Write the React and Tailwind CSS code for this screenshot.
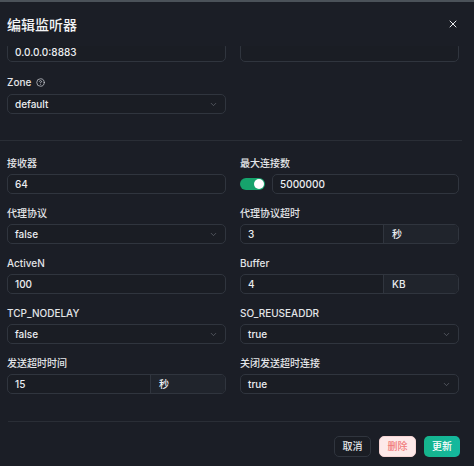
import { X, ChevronDown, CircleHelp } from 'lucide-react';

const FONT = { fontFamily: 'Inter, "Noto Sans CJK SC", sans-serif' };

function Label({ children, extra }) {
  return (
    <div className="h-[14px] mb-[4px] flex items-center gap-[5px] text-[10px] font-medium text-[#e3e5e8]">
      {children}
      {extra}
    </div>
  );
}

function TextInput({ value, className = '' }) {
  return (
    <div className={`h-[20px] flex items-center rounded-[5px] border border-[#30353e] bg-[#1a1d24] pl-[7px] text-[10px] font-medium text-[#eceef1] ${className}`}>
      {value}
    </div>
  );
}

function Select({ value }) {
  return (
    <div className="h-[20px] flex items-center justify-between rounded-[5px] border border-[#30353e] bg-[#1a1d24] pl-[7px] pr-[7px] text-[10px] font-medium text-[#eceef1]">
      <span>{value}</span>
      <ChevronDown className="w-[9px] h-[9px] text-[#6b7079]" strokeWidth={1.75} />
    </div>
  );
}

function Addon({ value, unit }) {
  return (
    <div className="h-[20px] flex rounded-[5px] border border-[#30353e] bg-[#1a1d24] text-[10px] font-medium text-[#eceef1] overflow-hidden">
      <div className="w-[143px] flex items-center pl-[7px] border-r border-[#30353e]">{value}</div>
      <div className="flex-1 flex items-center pl-[8px] bg-[#20242c]">{unit}</div>
    </div>
  );
}

function Field({ label, children, extra }) {
  return (
    <div className="mb-[12px]">
      <Label extra={extra}>{label}</Label>
      {children}
    </div>
  );
}

export default function App() {
  return (
    <div className="w-[474px] h-[466px] bg-[#1b1e26] overflow-hidden flex flex-col" style={FONT}>
      <div className="h-[2px] bg-[#4b5259]" />
      <div className="h-[44px] flex items-center justify-between pl-[7px] pr-[15px]">
        <h1 className="text-[14px] font-medium text-[#f2f3f5]">编辑监听器</h1>
        <X className="w-[12px] h-[12px] text-[#e8eaed]" strokeWidth={2} />
      </div>

      <div className="h-[375px] overflow-hidden pl-[7px] pr-[15px]">
        <div className="-mt-[4px]">
          <div className="grid grid-cols-2 gap-x-[14px]">
            <TextInput value="0.0.0.0:8883" />
            <TextInput value="" />
          </div>

          <div className="mt-[13px] grid grid-cols-2 gap-x-[14px]">
            <div>
              <div className="h-[14px] mb-[5px] flex items-center gap-[5px] text-[10px] font-medium text-[#e3e5e8]">
                Zone
                <CircleHelp className="w-[9px] h-[9px] text-[#c9ccd1]" strokeWidth={2} />
              </div>
              <Select value="default" />
            </div>
          </div>

          <div className="mt-[26px] -ml-[7px] mr-[-3px] h-px bg-[#2a2e36]" />

          <div className="mt-[15px] grid grid-cols-2 gap-x-[14px]">
            <Field label="接收器">
              <TextInput value="64" />
            </Field>
            <Field label="最大连接数">
              <div className="flex items-center gap-[7px]">
                <div className="w-[25px] h-[12px] rounded-full bg-[#16a36c] flex items-center justify-end pr-[1px]">
                  <div className="w-[10px] h-[10px] rounded-full bg-white" />
                </div>
                <TextInput value="5000000" className="flex-1" />
              </div>
            </Field>

            <Field label="代理协议">
              <Select value="false" />
            </Field>
            <Field label="代理协议超时">
              <Addon value="3" unit="秒" />
            </Field>

            <Field label="ActiveN">
              <TextInput value="100" />
            </Field>
            <Field label="Buffer">
              <Addon value="4" unit="KB" />
            </Field>

            <Field label="TCP_NODELAY">
              <Select value="false" />
            </Field>
            <Field label="SO_REUSEADDR">
              <Select value="true" />
            </Field>

            <Field label="发送超时时间">
              <Addon value="15" unit="秒" />
            </Field>
            <Field label="关闭发送超时连接">
              <Select value="true" />
            </Field>
          </div>
        </div>
      </div>

      <div className="ml-[8px] mr-[14px] border-t border-[#2a2e36] pt-[14px] flex justify-end gap-[8px] text-[10px] font-medium">
        <button className="w-[37px] h-[21px] rounded-[5px] border border-[#30353e] bg-[#1a1d24] text-[#e3e5e8]">取消</button>
        <button className="w-[37px] h-[21px] rounded-[5px] border border-[#f6d4d4] bg-[#fde9e9] text-[#f07a7a]">删除</button>
        <button className="w-[36px] h-[21px] rounded-[5px] bg-gradient-to-r from-[#16b48c] to-[#14b89e] text-white">更新</button>
      </div>
    </div>
  );
}
